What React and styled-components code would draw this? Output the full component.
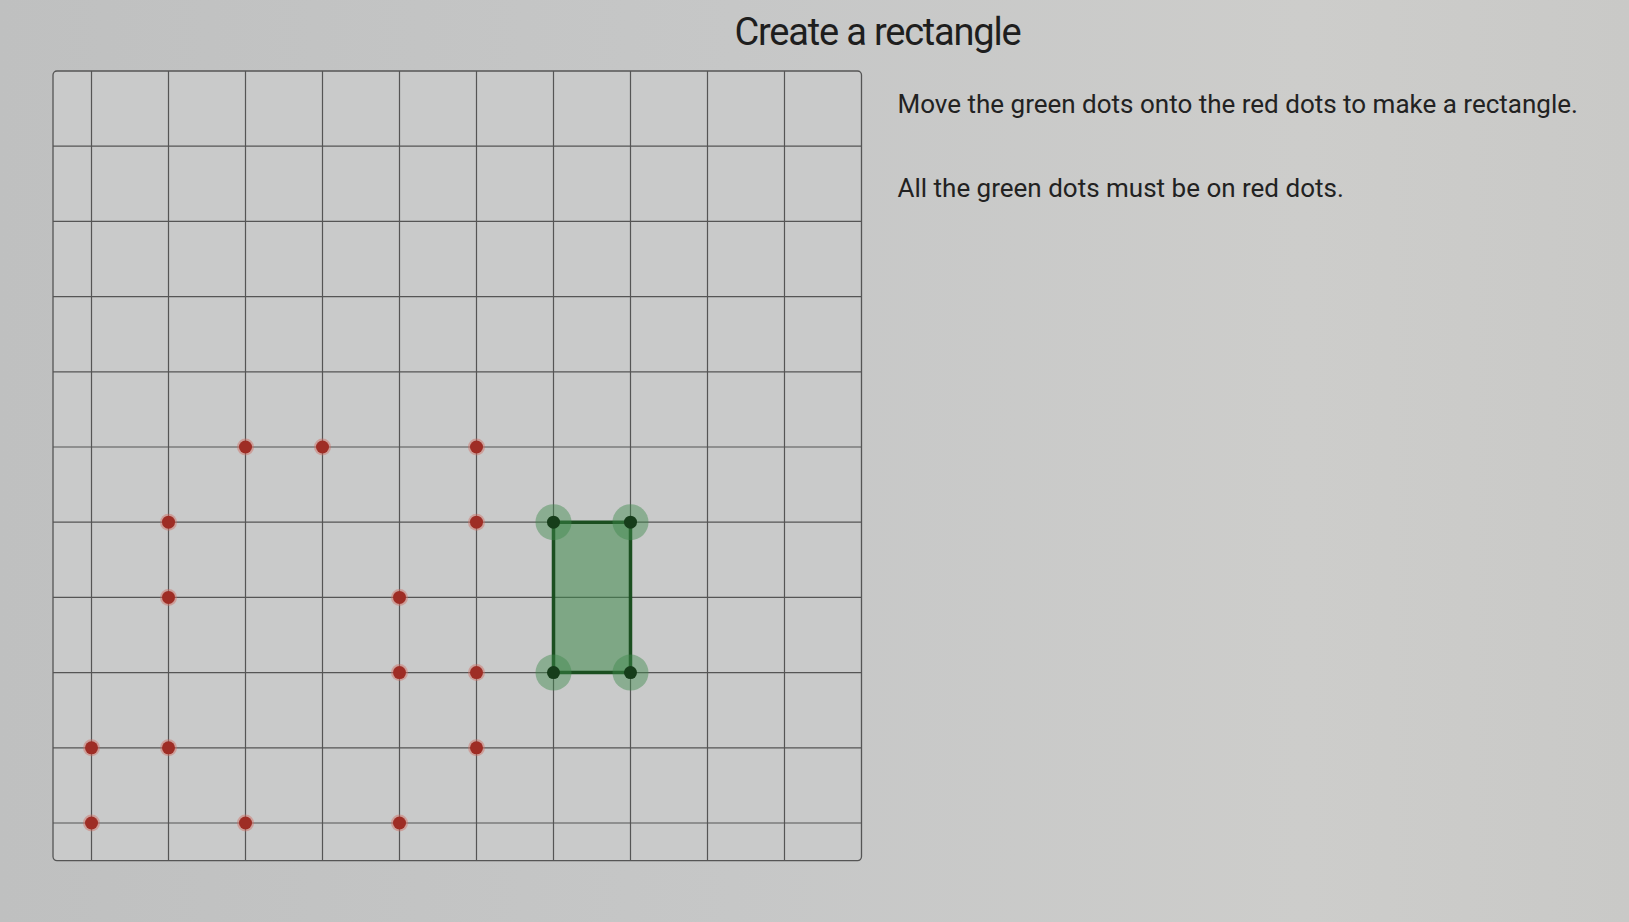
import React from "react";
import styled, { createGlobalStyle } from "styled-components";

const GlobalStyle = createGlobalStyle`
  html, body {
    margin: 0;
    padding: 0;
  }
  body {
    background: linear-gradient(90deg, #bfc0c0 0%, #c6c7c7 45%, #cdcdcb 80%, #c9c9c7 100%);
    font-family: Roboto, "Open Sans", Arial, sans-serif;
    color: #222;
  }
`;

const Page = styled.div`
  width: 1629px;
  height: 922px;
  overflow: hidden;
`;

const Title = styled.h1`
  margin: 0;
  height: 70px;
  padding: 8px 0 0 126px;
  box-sizing: border-box;
  text-align: center;
  font-size: 38px;
  font-weight: 400;
  letter-spacing: -1.2px;
  color: #1e1e1e;
  line-height: 48px;
`;

const Main = styled.div`
  display: flex;
  align-items: flex-start;
  padding-left: 52px;
`;

const Board = styled.svg`
  display: block;
  flex: none;
`;

const Instructions = styled.div`
  padding: 17px 0 0 35px;
  display: flex;
  flex-direction: column;
  gap: 50px;
`;

const Line = styled.p`
  margin: 0;
  font-size: 26px;
  line-height: 34px;
  letter-spacing: 0;
  color: #222;
`;

const CELL_X = 77;
const CELL_Y = 75.2;
const HALF_X = 38.5;
const COLS = 10;
const ROWS = 10;
const W = HALF_X + COLS * CELL_X;
const H = ROWS * CELL_Y + CELL_Y / 2;

const px = (c) => HALF_X + c * CELL_X;
const py = (r) => (r + 1) * CELL_Y;

const redDots = [
  [2, 4], [3, 4], [5, 4],
  [1, 5], [5, 5],
  [1, 6], [4, 6],
  [4, 7], [5, 7],
  [0, 8], [1, 8], [5, 8],
  [0, 9], [2, 9], [4, 9],
];

const rect = [[6, 5], [7, 5], [7, 7], [6, 7]];

function Grid() {
  const lines = [];
  for (let c = 0; c < COLS; c++) {
    lines.push(<line key={`v${c}`} x1={px(c)} y1={0} x2={px(c)} y2={H} />);
  }
  for (let r = 0; r < ROWS; r++) {
    lines.push(<line key={`h${r}`} x1={0} y1={py(r)} x2={W} y2={py(r)} />);
  }
  const poly = rect.map(([c, r]) => `${px(c)},${py(r)}`).join(" ");

  return (
    <Board width={W + 2} height={H + 2} viewBox={`-1 -1 ${W + 2} ${H + 2}`}>
      <rect x={0} y={0} width={W} height={H} rx={4} fill="#c9caca" />
      <g stroke="#555" strokeWidth="1.2">{lines}</g>
      <rect x={0} y={0} width={W} height={H} rx={4} fill="none" stroke="#555" strokeWidth="1.3" />
      {redDots.map(([c, r]) => (
        <g key={`${c}-${r}`}>
          <circle cx={px(c)} cy={py(r)} r={8.5} fill="#d06a60" opacity="0.45" />
          <circle cx={px(c)} cy={py(r)} r={6.5} fill="#9e2d25" />
        </g>
      ))}
      <polygon points={poly} fill="#3f8a4c" fillOpacity="0.55" stroke="#1b4f20" strokeWidth="3.5" strokeLinejoin="round" />
      {rect.map(([c, r]) => (
        <g key={`g${c}-${r}`}>
          <circle cx={px(c)} cy={py(r)} r={18} fill="#3f8a4c" fillOpacity="0.45" />
          <circle cx={px(c)} cy={py(r)} r={6.5} fill="#163d1a" />
        </g>
      ))}
    </Board>
  );
}

export default function App() {
  return (
    <>
      <GlobalStyle />
      <Page>
        <Title>Create a rectangle</Title>
        <Main>
          <Grid />
          <Instructions>
            <Line>Move the green dots onto the red dots to make a rectangle.</Line>
            <Line>All the green dots must be on red dots.</Line>
          </Instructions>
        </Main>
      </Page>
    </>
  );
}
